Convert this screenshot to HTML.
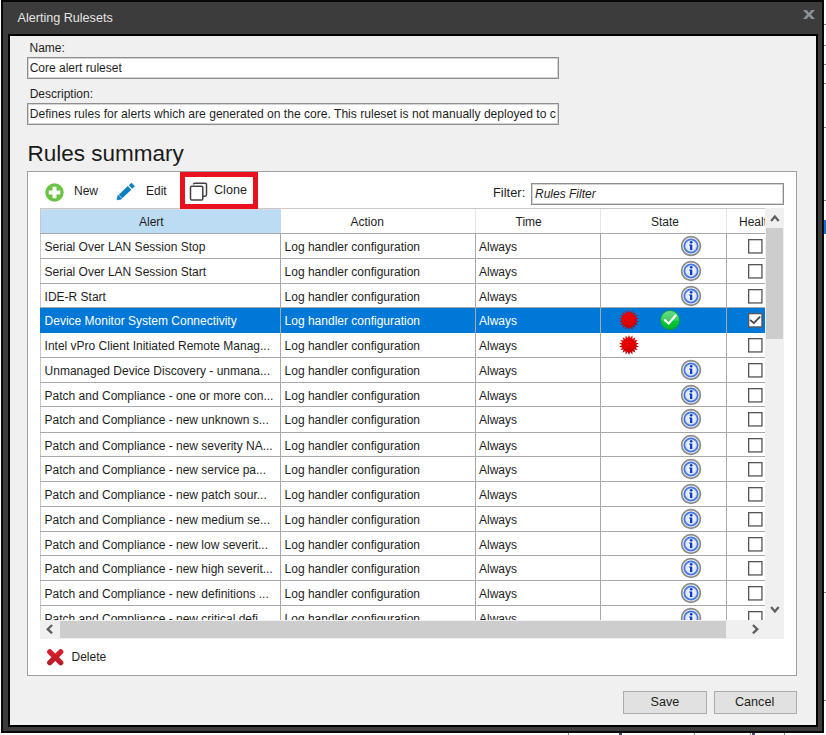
<!DOCTYPE html>
<html><head><meta charset="utf-8"><style>
*{box-sizing:border-box;margin:0;padding:0}
html,body{width:826px;height:735px;overflow:hidden;background:#fff;font-family:"Liberation Sans",sans-serif;font-size:12px;color:#1e1e1e}
.abs{position:absolute}
#frame{position:absolute;left:1px;top:0;width:823px;height:733px;background:#3c3c3c;border:2px solid #080808}
#content{position:absolute;left:8px;top:34px;width:810px;height:693px;background:#f0f0f0;border:2px solid #000}
.lbl{position:absolute;font-size:12px;line-height:12px;white-space:nowrap;color:#1e1e1e}
.tb{position:absolute;background:#fff;border:1px solid #8e8e8e;box-shadow:inset 0 0 0 1px #d4d4d4}
#panel{position:absolute;left:27px;top:171px;width:770px;height:505px;background:#fff;border:1px solid #a0a0a0}
#grid{position:absolute;left:40px;top:208px;width:725px;height:412px;overflow:hidden;background:#fff}
.row{position:absolute;left:0;width:725px;border-bottom:1px solid #a8a8a8}
.row.sel{background:#0078d7;color:#fff;border-bottom-color:#0078d7}
.row .t{position:absolute;top:7px;font-size:12px;line-height:12px;white-space:nowrap}
.ic{position:absolute;top:1.6px;width:20px;height:20px}
.ic svg,.cb svg{display:block;overflow:visible}
.cb{position:absolute;top:5px;width:15px;height:15px}
.vsep{position:absolute;width:1px;background:#a8a8a8}
</style></head><body>
<div class="abs" style="left:824px;top:24px;width:2px;height:1px;background:#8a8a8a"></div><div class="abs" style="left:824px;top:45px;width:2px;height:1px;background:#8a8a8a"></div><div class="abs" style="left:824px;top:64px;width:2px;height:1px;background:#8a8a8a"></div><div class="abs" style="left:824px;top:83px;width:2px;height:1px;background:#8a8a8a"></div><div class="abs" style="left:824px;top:127px;width:2px;height:1px;background:#8a8a8a"></div><div class="abs" style="left:824px;top:200px;width:2px;height:1px;background:#8a8a8a"></div><div class="abs" style="left:824px;top:592px;width:2px;height:1px;background:#8a8a8a"></div><div class="abs" style="left:824px;top:700px;width:2px;height:1px;background:#8a8a8a"></div><div class="abs" style="left:824px;top:220px;width:2px;height:14px;background:#0a74d8"></div><div class="abs" style="left:568px;top:733px;width:1px;height:2px;background:#8a8a8a"></div><div class="abs" style="left:694px;top:733px;width:1px;height:2px;background:#8a8a8a"></div><div class="abs" style="left:750px;top:733px;width:1px;height:2px;background:#8a8a8a"></div><div class="abs" style="left:784px;top:733px;width:1px;height:2px;background:#8a8a8a"></div><div class="abs" style="left:619px;top:733px;width:3px;height:2px;background:#5a4a6a"></div><div class="abs" style="left:752px;top:733px;width:3px;height:2px;background:#5a4a6a"></div>
<div id="frame"></div>
<div class="lbl" style="left:17.5px;top:12.3px;color:#e4e4e4;font-size:12.6px;line-height:12.6px">Alerting Rulesets</div>
<svg class="abs" style="left:803.2px;top:10.1px" width="12" height="9" viewBox="0 0 12 9"><polygon points="0,0 3.7,0 6,2.8 8.3,0 12,0 7.9,4.5 12,9 8.3,9 6,6.2 3.7,9 0,9 4.1,4.5" fill="#8a9098"/></svg>
<div id="content"></div>
<div class="lbl" style="left:29.5px;top:41.8px">Name:</div>
<div class="tb" style="left:27px;top:57px;width:532px;height:22px"></div>
<div class="lbl" style="left:29.7px;top:61.7px">Core alert ruleset</div>
<div class="lbl" style="left:29.7px;top:87.7px">Description:</div>
<div class="tb" style="left:27px;top:103px;width:532px;height:22px"></div>
<div class="lbl" style="left:29.7px;top:106.8px;width:527px;overflow:hidden;font-size:12.1px;line-height:14px">Defines rules for alerts which are generated on the core. This ruleset is not manually deployed to c</div>
<div class="lbl" style="left:27.5px;top:143.3px;font-size:22.5px;line-height:22px;color:#1a1a1a">Rules summary</div>
<div id="panel"></div>
<!-- toolbar -->
<svg class="abs" style="left:45px;top:183px" width="19" height="19" viewBox="0 0 19 19"><circle cx="9.5" cy="9.5" r="9.2" fill="#6ac443"/><path d="M9.5 3.8v11.5M3.8 9.5h11.5" stroke="#fff" stroke-width="4"/></svg>
<div class="lbl" style="left:74px;top:184.5px">New</div>
<svg class="abs" style="left:110px;top:178px" width="30" height="28" viewBox="0 0 30 28"><line x1="10.5" y1="18.5" x2="19.6" y2="9.9" stroke="#0a80c2" stroke-width="5.1"/><polygon points="11.67,20.9 8.17,17.2 7.0,21.8" fill="#0a80c2" stroke="#0a80c2" stroke-width="0.8" stroke-linejoin="round"/><line x1="20.5" y1="9.05" x2="23.2" y2="6.5" stroke="#0a80c2" stroke-width="4.9" stroke-linecap="butt"/></svg>
<div class="lbl" style="left:146px;top:184.5px">Edit</div>
<div class="abs" style="left:180px;top:172px;width:78px;height:37px;border:5px solid #e8111d;z-index:5"></div>
<svg class="abs" style="left:189px;top:182px" width="19" height="19" viewBox="0 0 19 19"><path d="M4.5 2.5 Q4.5 1.2 5.8 1.2 H16.2 Q17.5 1.2 17.5 2.5 V12.8 Q17.5 14.2 16.2 14.2 H14" fill="none" stroke="#404040" stroke-width="1.5"/><rect x="1.5" y="4.2" width="12.3" height="13.8" rx="1.3" fill="#fff" stroke="#404040" stroke-width="1.5"/></svg>
<div class="lbl" style="left:214px;top:184.3px;font-size:12.6px">Clone</div>
<div class="lbl" style="left:493px;top:187.3px;font-size:12.9px">Filter:</div>
<div class="tb" style="left:531px;top:183px;width:253px;height:22px"></div>
<div class="lbl" style="left:535px;top:187.6px;font-style:italic;color:#1e1e1e">Rules Filter</div>
<!-- grid -->
<div id="grid">
  <div class="abs" style="left:0;top:0;width:725px;height:1px;background:#c8c8c8"></div>
  <div class="abs" style="left:0;top:0;width:1px;height:412px;background:#c8c8c8"></div>
  <div class="abs" style="left:1px;top:1px;width:240px;height:24px;background:#bcdcf4;border-top:1px solid #d4dde6"></div>
  <div class="abs" style="left:0;top:25px;width:725px;height:1px;background:#a8a8a8"></div>
  <div class="vsep" style="left:435px;top:1px;height:24px;background:#e6e6e6"></div>
  <div class="vsep" style="left:560px;top:1px;height:24px;background:#e6e6e6"></div>
  <div class="vsep" style="left:686px;top:1px;height:24px;background:#e6e6e6"></div>
  <span class="lbl" style="left:99px;top:8px">Alert</span>
  <span class="lbl" style="left:310.5px;top:8px">Action</span>
  <span class="lbl" style="left:475.5px;top:8px">Time</span>
  <span class="lbl" style="left:611px;top:8px">State</span>
  <span class="lbl" style="left:699px;top:8px">Healt</span>
  <div class="abs" style="left:0;top:0;width:725px;height:412px">
  <div class="row" style="top:26.00px;height:25.00px"><span class="t" style="left:4.6px">Serial Over LAN Session Stop</span><span class="t" style="left:244.6px">Log handler configuration</span><span class="t" style="left:439.0px">Always</span><div class="ic" style="left:640.75px"><svg width="20" height="20" viewBox="0 0 20 20"><defs><radialGradient id="ig" cx="50%" cy="45%" r="55%"><stop offset="0" stop-color="#ffffff"/><stop offset="1" stop-color="#cfd8ea"/></radialGradient></defs><circle cx="10" cy="10" r="9.35" fill="#f2f2f2" stroke="#8a8a8a" stroke-width="1.7"/><circle cx="10" cy="10" r="6.7" fill="url(#ig)" stroke="#4479e6" stroke-width="1.8"/><circle cx="10.2" cy="6.3" r="1.35" fill="#0a3cd4"/><path d="M8.0 8.4h3.3v5.6h-2.3v-4.4h-1.0z" fill="#0a3cd4"/></svg></div><div class="cb" style="left:708px"><svg width="15" height="15" viewBox="0 0 15 15"><rect x="0.65" y="0.65" width="13.3" height="13.3" fill="#fff" stroke="#555" stroke-width="1.3"/></svg></div></div><div class="row" style="top:51.00px;height:25.00px"><span class="t" style="left:4.6px">Serial Over LAN Session Start</span><span class="t" style="left:244.6px">Log handler configuration</span><span class="t" style="left:439.0px">Always</span><div class="ic" style="left:640.75px"><svg width="20" height="20" viewBox="0 0 20 20"><defs><radialGradient id="ig" cx="50%" cy="45%" r="55%"><stop offset="0" stop-color="#ffffff"/><stop offset="1" stop-color="#cfd8ea"/></radialGradient></defs><circle cx="10" cy="10" r="9.35" fill="#f2f2f2" stroke="#8a8a8a" stroke-width="1.7"/><circle cx="10" cy="10" r="6.7" fill="url(#ig)" stroke="#4479e6" stroke-width="1.8"/><circle cx="10.2" cy="6.3" r="1.35" fill="#0a3cd4"/><path d="M8.0 8.4h3.3v5.6h-2.3v-4.4h-1.0z" fill="#0a3cd4"/></svg></div><div class="cb" style="left:708px"><svg width="15" height="15" viewBox="0 0 15 15"><rect x="0.65" y="0.65" width="13.3" height="13.3" fill="#fff" stroke="#555" stroke-width="1.3"/></svg></div></div><div class="row" style="top:76.00px;height:24.00px"><span class="t" style="left:4.6px">IDE-R Start</span><span class="t" style="left:244.6px">Log handler configuration</span><span class="t" style="left:439.0px">Always</span><div class="ic" style="left:640.75px"><svg width="20" height="20" viewBox="0 0 20 20"><defs><radialGradient id="ig" cx="50%" cy="45%" r="55%"><stop offset="0" stop-color="#ffffff"/><stop offset="1" stop-color="#cfd8ea"/></radialGradient></defs><circle cx="10" cy="10" r="9.35" fill="#f2f2f2" stroke="#8a8a8a" stroke-width="1.7"/><circle cx="10" cy="10" r="6.7" fill="url(#ig)" stroke="#4479e6" stroke-width="1.8"/><circle cx="10.2" cy="6.3" r="1.35" fill="#0a3cd4"/><path d="M8.0 8.4h3.3v5.6h-2.3v-4.4h-1.0z" fill="#0a3cd4"/></svg></div><div class="cb" style="left:708px"><svg width="15" height="15" viewBox="0 0 15 15"><rect x="0.65" y="0.65" width="13.3" height="13.3" fill="#fff" stroke="#555" stroke-width="1.3"/></svg></div></div><div class="row sel" style="top:100.00px;height:25.00px"><span class="t" style="left:4.6px">Device Monitor System Connectivity</span><span class="t" style="left:244.6px">Log handler configuration</span><span class="t" style="left:439.0px">Always</span><div class="ic" style="left:578.90px"><svg width="20" height="20" viewBox="0 0 20 20"><defs><radialGradient id="bg3" cx="45%" cy="40%" r="60%"><stop offset="0" stop-color="#f00000"/><stop offset="0.55" stop-color="#dc0000"/><stop offset="1" stop-color="#a00010"/></radialGradient></defs><polygon points="10.00,0.00 11.22,3.11 13.42,0.60 13.50,3.94 16.43,2.34 15.36,5.50 18.66,5.00 16.58,7.61 19.85,8.26 17.00,10.00 19.85,11.74 16.58,12.39 18.66,15.00 15.36,14.50 16.43,17.66 13.50,16.06 13.42,19.40 11.22,16.89 10.00,20.00 8.78,16.89 6.58,19.40 6.50,16.06 3.57,17.66 4.64,14.50 1.34,15.00 3.42,12.39 0.15,11.74 3.00,10.00 0.15,8.26 3.42,7.61 1.34,5.00 4.64,5.50 3.57,2.34 6.50,3.94 6.58,0.60 8.78,3.11" fill="url(#bg3)"/></svg></div><div class="ic" style="left:620.00px"><svg width="20" height="20" viewBox="0 0 20 20"><defs><linearGradient id="cg" x1="0" y1="0" x2="0" y2="1"><stop offset="0" stop-color="#6fdc88"/><stop offset="0.5" stop-color="#3cd060"/><stop offset="0.55" stop-color="#06c936"/><stop offset="1" stop-color="#02b52c"/></linearGradient></defs><circle cx="10" cy="10" r="9.5" fill="url(#cg)" stroke="#07a02a" stroke-width="0.8"/><path d="M4.9 10.1 L8.7 13.5 L15.6 5.6" fill="none" stroke="#fff" stroke-width="2.3" stroke-linecap="round" stroke-linejoin="round"/></svg></div><div class="cb" style="left:708px"><svg width="15" height="15" viewBox="0 0 15 15"><rect x="0.65" y="0.65" width="13.3" height="13.3" fill="#fff" stroke="#555" stroke-width="1.3"/><path d="M2.1 6.9 L5.8 10.1 L12.2 3.6" fill="none" stroke="#404040" stroke-width="1.7"/></svg></div></div><div class="row" style="top:125.00px;height:25.00px"><span class="t" style="left:4.6px">Intel vPro Client Initiated Remote Manag...</span><span class="t" style="left:244.6px">Log handler configuration</span><span class="t" style="left:439.0px">Always</span><div class="ic" style="left:578.90px"><svg width="20" height="20" viewBox="0 0 20 20"><defs><radialGradient id="bg4" cx="45%" cy="40%" r="60%"><stop offset="0" stop-color="#f00000"/><stop offset="0.55" stop-color="#dc0000"/><stop offset="1" stop-color="#a00010"/></radialGradient></defs><polygon points="10.00,0.00 11.22,3.11 13.42,0.60 13.50,3.94 16.43,2.34 15.36,5.50 18.66,5.00 16.58,7.61 19.85,8.26 17.00,10.00 19.85,11.74 16.58,12.39 18.66,15.00 15.36,14.50 16.43,17.66 13.50,16.06 13.42,19.40 11.22,16.89 10.00,20.00 8.78,16.89 6.58,19.40 6.50,16.06 3.57,17.66 4.64,14.50 1.34,15.00 3.42,12.39 0.15,11.74 3.00,10.00 0.15,8.26 3.42,7.61 1.34,5.00 4.64,5.50 3.57,2.34 6.50,3.94 6.58,0.60 8.78,3.11" fill="url(#bg4)"/></svg></div><div class="cb" style="left:708px"><svg width="15" height="15" viewBox="0 0 15 15"><rect x="0.65" y="0.65" width="13.3" height="13.3" fill="#fff" stroke="#555" stroke-width="1.3"/></svg></div></div><div class="row" style="top:150.00px;height:25.00px"><span class="t" style="left:4.6px">Unmanaged Device Discovery - unmana...</span><span class="t" style="left:244.6px">Log handler configuration</span><span class="t" style="left:439.0px">Always</span><div class="ic" style="left:640.75px"><svg width="20" height="20" viewBox="0 0 20 20"><defs><radialGradient id="ig" cx="50%" cy="45%" r="55%"><stop offset="0" stop-color="#ffffff"/><stop offset="1" stop-color="#cfd8ea"/></radialGradient></defs><circle cx="10" cy="10" r="9.35" fill="#f2f2f2" stroke="#8a8a8a" stroke-width="1.7"/><circle cx="10" cy="10" r="6.7" fill="url(#ig)" stroke="#4479e6" stroke-width="1.8"/><circle cx="10.2" cy="6.3" r="1.35" fill="#0a3cd4"/><path d="M8.0 8.4h3.3v5.6h-2.3v-4.4h-1.0z" fill="#0a3cd4"/></svg></div><div class="cb" style="left:708px"><svg width="15" height="15" viewBox="0 0 15 15"><rect x="0.65" y="0.65" width="13.3" height="13.3" fill="#fff" stroke="#555" stroke-width="1.3"/></svg></div></div><div class="row" style="top:175.00px;height:24.00px"><span class="t" style="left:4.6px">Patch and Compliance - one or more con...</span><span class="t" style="left:244.6px">Log handler configuration</span><span class="t" style="left:439.0px">Always</span><div class="ic" style="left:640.75px"><svg width="20" height="20" viewBox="0 0 20 20"><defs><radialGradient id="ig" cx="50%" cy="45%" r="55%"><stop offset="0" stop-color="#ffffff"/><stop offset="1" stop-color="#cfd8ea"/></radialGradient></defs><circle cx="10" cy="10" r="9.35" fill="#f2f2f2" stroke="#8a8a8a" stroke-width="1.7"/><circle cx="10" cy="10" r="6.7" fill="url(#ig)" stroke="#4479e6" stroke-width="1.8"/><circle cx="10.2" cy="6.3" r="1.35" fill="#0a3cd4"/><path d="M8.0 8.4h3.3v5.6h-2.3v-4.4h-1.0z" fill="#0a3cd4"/></svg></div><div class="cb" style="left:708px"><svg width="15" height="15" viewBox="0 0 15 15"><rect x="0.65" y="0.65" width="13.3" height="13.3" fill="#fff" stroke="#555" stroke-width="1.3"/></svg></div></div><div class="row" style="top:199.00px;height:26.00px"><span class="t" style="left:4.6px">Patch and Compliance - new unknown s...</span><span class="t" style="left:244.6px">Log handler configuration</span><span class="t" style="left:439.0px">Always</span><div class="ic" style="left:640.75px"><svg width="20" height="20" viewBox="0 0 20 20"><defs><radialGradient id="ig" cx="50%" cy="45%" r="55%"><stop offset="0" stop-color="#ffffff"/><stop offset="1" stop-color="#cfd8ea"/></radialGradient></defs><circle cx="10" cy="10" r="9.35" fill="#f2f2f2" stroke="#8a8a8a" stroke-width="1.7"/><circle cx="10" cy="10" r="6.7" fill="url(#ig)" stroke="#4479e6" stroke-width="1.8"/><circle cx="10.2" cy="6.3" r="1.35" fill="#0a3cd4"/><path d="M8.0 8.4h3.3v5.6h-2.3v-4.4h-1.0z" fill="#0a3cd4"/></svg></div><div class="cb" style="left:708px"><svg width="15" height="15" viewBox="0 0 15 15"><rect x="0.65" y="0.65" width="13.3" height="13.3" fill="#fff" stroke="#555" stroke-width="1.3"/></svg></div></div><div class="row" style="top:225.00px;height:24.00px"><span class="t" style="left:4.6px">Patch and Compliance - new severity NA...</span><span class="t" style="left:244.6px">Log handler configuration</span><span class="t" style="left:439.0px">Always</span><div class="ic" style="left:640.75px"><svg width="20" height="20" viewBox="0 0 20 20"><defs><radialGradient id="ig" cx="50%" cy="45%" r="55%"><stop offset="0" stop-color="#ffffff"/><stop offset="1" stop-color="#cfd8ea"/></radialGradient></defs><circle cx="10" cy="10" r="9.35" fill="#f2f2f2" stroke="#8a8a8a" stroke-width="1.7"/><circle cx="10" cy="10" r="6.7" fill="url(#ig)" stroke="#4479e6" stroke-width="1.8"/><circle cx="10.2" cy="6.3" r="1.35" fill="#0a3cd4"/><path d="M8.0 8.4h3.3v5.6h-2.3v-4.4h-1.0z" fill="#0a3cd4"/></svg></div><div class="cb" style="left:708px"><svg width="15" height="15" viewBox="0 0 15 15"><rect x="0.65" y="0.65" width="13.3" height="13.3" fill="#fff" stroke="#555" stroke-width="1.3"/></svg></div></div><div class="row" style="top:249.00px;height:25.00px"><span class="t" style="left:4.6px">Patch and Compliance - new service pa...</span><span class="t" style="left:244.6px">Log handler configuration</span><span class="t" style="left:439.0px">Always</span><div class="ic" style="left:640.75px"><svg width="20" height="20" viewBox="0 0 20 20"><defs><radialGradient id="ig" cx="50%" cy="45%" r="55%"><stop offset="0" stop-color="#ffffff"/><stop offset="1" stop-color="#cfd8ea"/></radialGradient></defs><circle cx="10" cy="10" r="9.35" fill="#f2f2f2" stroke="#8a8a8a" stroke-width="1.7"/><circle cx="10" cy="10" r="6.7" fill="url(#ig)" stroke="#4479e6" stroke-width="1.8"/><circle cx="10.2" cy="6.3" r="1.35" fill="#0a3cd4"/><path d="M8.0 8.4h3.3v5.6h-2.3v-4.4h-1.0z" fill="#0a3cd4"/></svg></div><div class="cb" style="left:708px"><svg width="15" height="15" viewBox="0 0 15 15"><rect x="0.65" y="0.65" width="13.3" height="13.3" fill="#fff" stroke="#555" stroke-width="1.3"/></svg></div></div><div class="row" style="top:274.00px;height:25.00px"><span class="t" style="left:4.6px">Patch and Compliance - new patch sour...</span><span class="t" style="left:244.6px">Log handler configuration</span><span class="t" style="left:439.0px">Always</span><div class="ic" style="left:640.75px"><svg width="20" height="20" viewBox="0 0 20 20"><defs><radialGradient id="ig" cx="50%" cy="45%" r="55%"><stop offset="0" stop-color="#ffffff"/><stop offset="1" stop-color="#cfd8ea"/></radialGradient></defs><circle cx="10" cy="10" r="9.35" fill="#f2f2f2" stroke="#8a8a8a" stroke-width="1.7"/><circle cx="10" cy="10" r="6.7" fill="url(#ig)" stroke="#4479e6" stroke-width="1.8"/><circle cx="10.2" cy="6.3" r="1.35" fill="#0a3cd4"/><path d="M8.0 8.4h3.3v5.6h-2.3v-4.4h-1.0z" fill="#0a3cd4"/></svg></div><div class="cb" style="left:708px"><svg width="15" height="15" viewBox="0 0 15 15"><rect x="0.65" y="0.65" width="13.3" height="13.3" fill="#fff" stroke="#555" stroke-width="1.3"/></svg></div></div><div class="row" style="top:299.00px;height:25.00px"><span class="t" style="left:4.6px">Patch and Compliance - new medium se...</span><span class="t" style="left:244.6px">Log handler configuration</span><span class="t" style="left:439.0px">Always</span><div class="ic" style="left:640.75px"><svg width="20" height="20" viewBox="0 0 20 20"><defs><radialGradient id="ig" cx="50%" cy="45%" r="55%"><stop offset="0" stop-color="#ffffff"/><stop offset="1" stop-color="#cfd8ea"/></radialGradient></defs><circle cx="10" cy="10" r="9.35" fill="#f2f2f2" stroke="#8a8a8a" stroke-width="1.7"/><circle cx="10" cy="10" r="6.7" fill="url(#ig)" stroke="#4479e6" stroke-width="1.8"/><circle cx="10.2" cy="6.3" r="1.35" fill="#0a3cd4"/><path d="M8.0 8.4h3.3v5.6h-2.3v-4.4h-1.0z" fill="#0a3cd4"/></svg></div><div class="cb" style="left:708px"><svg width="15" height="15" viewBox="0 0 15 15"><rect x="0.65" y="0.65" width="13.3" height="13.3" fill="#fff" stroke="#555" stroke-width="1.3"/></svg></div></div><div class="row" style="top:324.00px;height:24.00px"><span class="t" style="left:4.6px">Patch and Compliance - new low severit...</span><span class="t" style="left:244.6px">Log handler configuration</span><span class="t" style="left:439.0px">Always</span><div class="ic" style="left:640.75px"><svg width="20" height="20" viewBox="0 0 20 20"><defs><radialGradient id="ig" cx="50%" cy="45%" r="55%"><stop offset="0" stop-color="#ffffff"/><stop offset="1" stop-color="#cfd8ea"/></radialGradient></defs><circle cx="10" cy="10" r="9.35" fill="#f2f2f2" stroke="#8a8a8a" stroke-width="1.7"/><circle cx="10" cy="10" r="6.7" fill="url(#ig)" stroke="#4479e6" stroke-width="1.8"/><circle cx="10.2" cy="6.3" r="1.35" fill="#0a3cd4"/><path d="M8.0 8.4h3.3v5.6h-2.3v-4.4h-1.0z" fill="#0a3cd4"/></svg></div><div class="cb" style="left:708px"><svg width="15" height="15" viewBox="0 0 15 15"><rect x="0.65" y="0.65" width="13.3" height="13.3" fill="#fff" stroke="#555" stroke-width="1.3"/></svg></div></div><div class="row" style="top:348.00px;height:25.00px"><span class="t" style="left:4.6px">Patch and Compliance - new high severit...</span><span class="t" style="left:244.6px">Log handler configuration</span><span class="t" style="left:439.0px">Always</span><div class="ic" style="left:640.75px"><svg width="20" height="20" viewBox="0 0 20 20"><defs><radialGradient id="ig" cx="50%" cy="45%" r="55%"><stop offset="0" stop-color="#ffffff"/><stop offset="1" stop-color="#cfd8ea"/></radialGradient></defs><circle cx="10" cy="10" r="9.35" fill="#f2f2f2" stroke="#8a8a8a" stroke-width="1.7"/><circle cx="10" cy="10" r="6.7" fill="url(#ig)" stroke="#4479e6" stroke-width="1.8"/><circle cx="10.2" cy="6.3" r="1.35" fill="#0a3cd4"/><path d="M8.0 8.4h3.3v5.6h-2.3v-4.4h-1.0z" fill="#0a3cd4"/></svg></div><div class="cb" style="left:708px"><svg width="15" height="15" viewBox="0 0 15 15"><rect x="0.65" y="0.65" width="13.3" height="13.3" fill="#fff" stroke="#555" stroke-width="1.3"/></svg></div></div><div class="row" style="top:373.00px;height:25.00px"><span class="t" style="left:4.6px">Patch and Compliance - new definitions ...</span><span class="t" style="left:244.6px">Log handler configuration</span><span class="t" style="left:439.0px">Always</span><div class="ic" style="left:640.75px"><svg width="20" height="20" viewBox="0 0 20 20"><defs><radialGradient id="ig" cx="50%" cy="45%" r="55%"><stop offset="0" stop-color="#ffffff"/><stop offset="1" stop-color="#cfd8ea"/></radialGradient></defs><circle cx="10" cy="10" r="9.35" fill="#f2f2f2" stroke="#8a8a8a" stroke-width="1.7"/><circle cx="10" cy="10" r="6.7" fill="url(#ig)" stroke="#4479e6" stroke-width="1.8"/><circle cx="10.2" cy="6.3" r="1.35" fill="#0a3cd4"/><path d="M8.0 8.4h3.3v5.6h-2.3v-4.4h-1.0z" fill="#0a3cd4"/></svg></div><div class="cb" style="left:708px"><svg width="15" height="15" viewBox="0 0 15 15"><rect x="0.65" y="0.65" width="13.3" height="13.3" fill="#fff" stroke="#555" stroke-width="1.3"/></svg></div></div><div class="row" style="top:398.00px;height:25.00px"><span class="t" style="left:4.6px">Patch and Compliance - new critical defi...</span><span class="t" style="left:244.6px">Log handler configuration</span><span class="t" style="left:439.0px">Always</span><div class="ic" style="left:640.75px"><svg width="20" height="20" viewBox="0 0 20 20"><defs><radialGradient id="ig" cx="50%" cy="45%" r="55%"><stop offset="0" stop-color="#ffffff"/><stop offset="1" stop-color="#cfd8ea"/></radialGradient></defs><circle cx="10" cy="10" r="9.35" fill="#f2f2f2" stroke="#8a8a8a" stroke-width="1.7"/><circle cx="10" cy="10" r="6.7" fill="url(#ig)" stroke="#4479e6" stroke-width="1.8"/><circle cx="10.2" cy="6.3" r="1.35" fill="#0a3cd4"/><path d="M8.0 8.4h3.3v5.6h-2.3v-4.4h-1.0z" fill="#0a3cd4"/></svg></div><div class="cb" style="left:708px"><svg width="15" height="15" viewBox="0 0 15 15"><rect x="0.65" y="0.65" width="13.3" height="13.3" fill="#fff" stroke="#555" stroke-width="1.3"/></svg></div></div>
  </div>
  <div class="vsep" style="left:240px;top:25px;height:400px"></div>
  <div class="vsep" style="left:435px;top:25px;height:400px"></div>
  <div class="vsep" style="left:560px;top:25px;height:400px"></div>
  <div class="vsep" style="left:686px;top:25px;height:400px"></div>
</div>
<!-- vertical scrollbar -->
<div class="abs" style="left:765px;top:208px;width:19px;height:412px;background:#f0f0f0"></div>
<div class="abs" style="left:766px;top:228px;width:17px;height:111px;background:#cdcdcd"></div>
<svg class="abs" style="left:769.5px;top:213px" width="10" height="10" viewBox="0 0 10 10"><path d="M1.1 7.9 L4.9 3.6 L8.7 7.9" fill="none" stroke="#5f5f5f" stroke-width="2.3"/></svg>
<svg class="abs" style="left:769.5px;top:605px" width="10" height="10" viewBox="0 0 10 10"><path d="M1.1 2.1 L4.9 6.4 L8.7 2.1" fill="none" stroke="#5f5f5f" stroke-width="2.3"/></svg>
<!-- horizontal scrollbar -->
<div class="abs" style="left:40px;top:620px;width:744px;height:18.5px;background:#f0f0f0"></div>
<div class="abs" style="left:59.7px;top:621px;width:666.3px;height:16.5px;background:#cdcdcd"></div>
<svg class="abs" style="left:44px;top:624px" width="10" height="10" viewBox="0 0 10 10"><path d="M8.1 1.0 L3.7 5.2 L8.1 9.4" fill="none" stroke="#5f5f5f" stroke-width="2.3"/></svg>
<svg class="abs" style="left:751px;top:624px" width="10" height="10" viewBox="0 0 10 10"><path d="M1.9 1.0 L6.3 5.2 L1.9 9.4" fill="none" stroke="#5f5f5f" stroke-width="2.3"/></svg>
<!-- delete -->
<svg class="abs" style="left:47px;top:649.3px" width="17" height="17" viewBox="0 0 17 17"><defs><linearGradient id="dg" x1="0" y1="0" x2="0" y2="1"><stop offset="0" stop-color="#d6202c"/><stop offset="1" stop-color="#b81c26"/></linearGradient></defs><path d="M2.8 2.8 L13.7 13.7 M13.7 2.8 L2.8 13.7" stroke="url(#dg)" stroke-width="5.3" stroke-linecap="round"/></svg>
<div class="lbl" style="left:71.5px;top:650.8px">Delete</div>
<!-- buttons -->
<div class="abs" style="left:623px;top:691px;width:84px;height:23px;background:#e1e1e1;border:1px solid #adadad"></div>
<div class="lbl" style="left:650.5px;top:695.8px;font-size:12.6px">Save</div>
<div class="abs" style="left:713.5px;top:691px;width:83.5px;height:23px;background:#e1e1e1;border:1px solid #adadad"></div>
<div class="lbl" style="left:735px;top:695.8px;font-size:12.6px">Cancel</div>
</body></html>
